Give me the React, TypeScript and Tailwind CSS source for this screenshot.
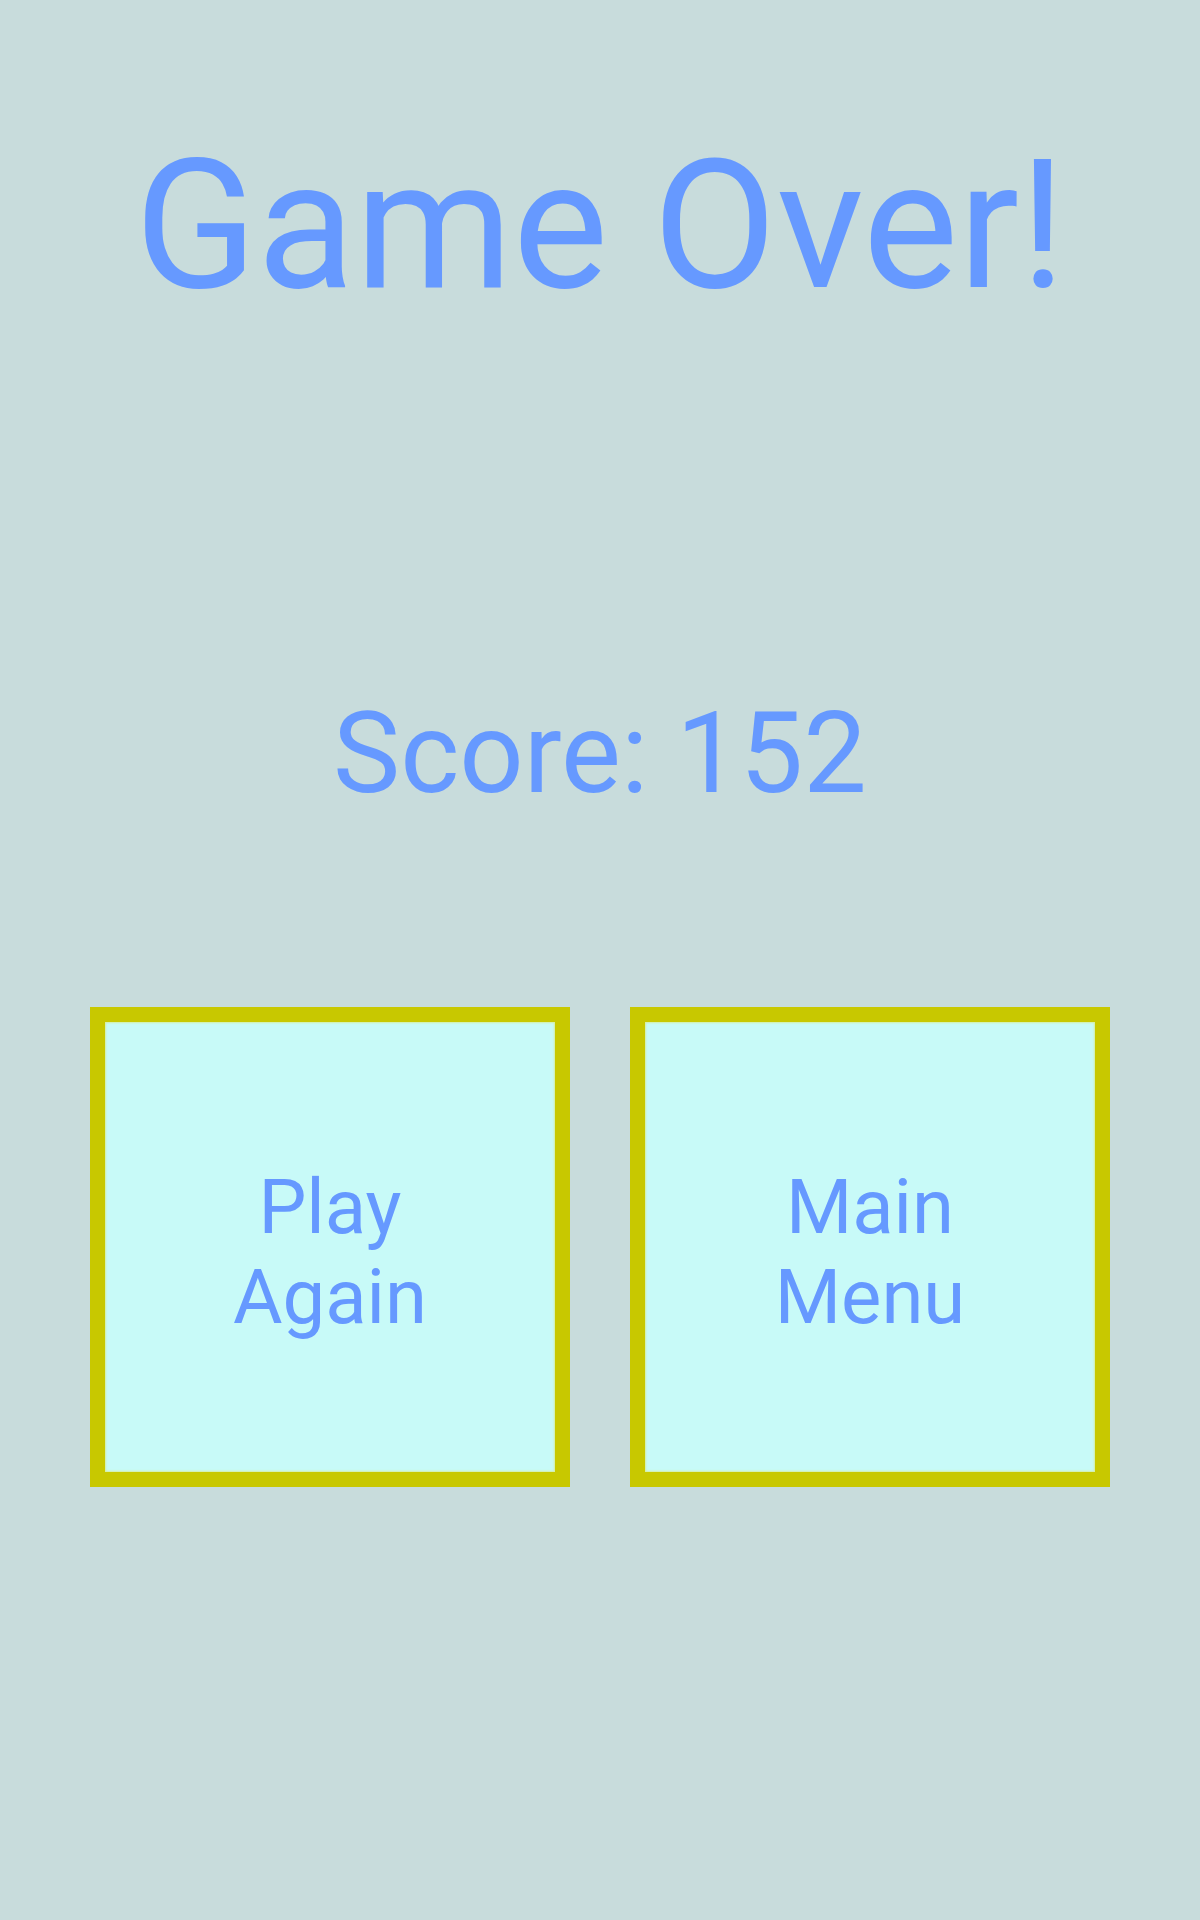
export default function App() {
  const buttons = [
    ['Play', 'Again'],
    ['Main', 'Menu'],
  ];

  return (
    <div
      className="min-h-[1920px] w-full bg-[#c8dcdc] text-[#6699ff] flex flex-col items-center"
      style={{ fontFamily: 'Roboto, "Noto Sans", sans-serif' }}
    >
      {/* Title */}
      <h1 className="pt-[134px] text-[180px] leading-[184px] font-normal whitespace-nowrap">
        Game Over!
      </h1>

      {/* Score */}
      <div className="mt-[378px] text-[113px] leading-[115px] whitespace-nowrap">
        Score: 152
      </div>

      {/* Actions */}
      <div className="mt-[196px] flex gap-[60px]">
        {buttons.map((lines) => (
          <button
            key={lines.join(' ')}
            className="w-[480px] h-[480px] border-[15px] border-[#c8c800] bg-[#c8faf8] shadow-[inset_0_0_2px_1px_#d6eea0] flex flex-col items-center justify-center pt-[10px] text-[76px] leading-[90px] text-[#6699ff]"
          >
            {lines.map((l) => (
              <span key={l}>{l}</span>
            ))}
          </button>
        ))}
      </div>
    </div>
  );
}
